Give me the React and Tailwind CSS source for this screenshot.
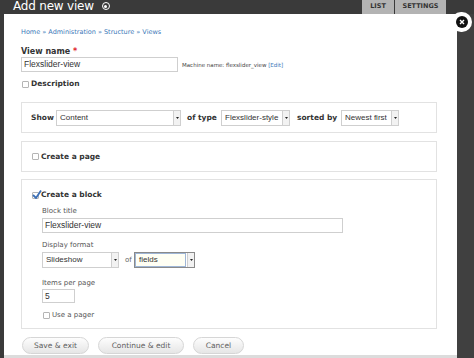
import React from "react";

const dv = { fontFamily: '"DejaVu Sans", Verdana, sans-serif' };
const ls = { fontFamily: '"Liberation Sans", Arial, sans-serif' };

function Check({ checked }) {
  return (
    <span className="relative inline-block w-[7px] h-[7px] border border-[#b5b5b5] bg-white rounded-[1px] shrink-0">
      {checked && (
        <svg className="absolute left-[-1px] top-[-3px]" width="10" height="9" viewBox="0 0 10 9">
          <path d="M1 5 L4 8 L9 0.5" stroke="#3b6fb6" strokeWidth="1.8" fill="none" />
        </svg>
      )}
    </span>
  );
}

function Select({ w, label, focus }) {
  return (
    <div
      className={`flex h-[16px] shrink-0 bg-white border ${focus ? "border-[#8a8a8a]" : "border-[#cfcfcf]"} ${w}`}
      style={ls}
    >
      <div className={`flex-1 min-w-0 overflow-hidden whitespace-nowrap flex items-center pl-[3px] text-[8px] font-normal text-[#333] ${focus ? "border border-[#9fb6d6] bg-[#fffff4]" : ""}`}>{label}</div>
      <div className="w-[7px] shrink-0 ml-[1px] border-l border-[#cfcfcf] bg-[#f2f2f2] flex items-center justify-center">
        <svg width="3" height="2" viewBox="0 0 3 2"><path d="M0 0 H3 L1.5 2 Z" fill="#222" /></svg>
      </div>
    </div>
  );
}

function Input({ w, value, h = "h-[15px]" }) {
  return (
    <div
      className={`${w} ${h} shrink-0 border border-[#cfcfcf] bg-white flex items-center pl-[2px] text-[8.5px] text-[#333]`}
      style={ls}
    >
      {value}
    </div>
  );
}

function Btn({ w, children }) {
  return (
    <div
      className={`${w} h-[17px] rounded-full border border-[#d6d6d6] bg-gradient-to-b from-[#fdfdfd] to-[#e6e6e6] flex items-center justify-center text-[7.5px] text-[#5e5e5e] whitespace-nowrap`}
      style={dv}
    >
      {children}
    </div>
  );
}

export default function App() {
  return (
    <div className="relative w-[474px] h-[358px] bg-[#404040] overflow-hidden flex flex-col" style={dv}>
      {/* header */}
      <div className="h-[14px] shrink-0 flex bg-[#3a3a3a] overflow-hidden">
        <div className="ml-[13px] text-[12px] leading-[13px] text-white tracking-[-0.2px] whitespace-nowrap">
          Add new view
        </div>
        <div className="ml-[8px] mt-[2px] w-[8px] h-[8px] rounded-full border border-white flex items-center justify-center">
          <div className="w-[3px] h-[3px] rounded-full bg-white" />
        </div>
        <div className="ml-auto mr-[28px] flex gap-[1px]">
          <div className="w-[32px] h-[14px] bg-[#b3b3b3] flex items-center justify-center text-[6.5px] font-bold text-[#333]">LIST</div>
          <div className="w-[51px] h-[14px] bg-[#b3b3b3] flex items-center justify-center text-[6.5px] font-bold text-[#333]">SETTINGS</div>
        </div>
      </div>

      {/* body */}
      <div className="flex flex-1">
        <div className="w-[4px] bg-[#3a3a3a]" />
        <div className="w-[453px] bg-white flex flex-col pl-[17px] pt-[14px]">
          <div className="text-[6.5px] leading-[8px] text-[#3a78b8] whitespace-nowrap">
            Home » Administration » Structure » Views
          </div>

          <div className="mt-[11px] text-[8px] leading-[10px] font-bold text-[#333]">
            View name <span className="text-[#e0262e]">*</span>
          </div>
          <div className="flex items-center">
            <Input w="w-[157px]" value="Flexslider-view" />
            <div className="ml-[4px] mt-[2px] text-[5.5px] text-[#444] whitespace-nowrap">
              Machine name: flexslider_view <span className="text-[#3a78b8]">[Edit]</span>
            </div>
          </div>

          <div className="mt-[6px] h-[12px] flex items-center gap-[2px] pl-[1px]">
            <Check />
            <span className="text-[7.5px] font-bold text-[#333]">Description</span>
          </div>

          {/* box 1 */}
          <div className="mt-[12px] w-[416px] h-[31px] border border-[#e2e2e2] flex items-center pl-[9px] text-[7.5px] font-bold text-[#333] whitespace-nowrap">
            <span className="w-[25px]">Show</span>
            <Select w="w-[125px]" label="Content" />
            <span className="ml-[6px] w-[34px]">of type</span>
            <Select w="w-[69px]" label="Flexslider-style" />
            <span className="ml-[7px] w-[44px]">sorted by</span>
            <Select w="w-[58px]" label="Newest first" />
          </div>

          {/* box 2 */}
          <div className="mt-[8px] w-[416px] h-[31px] border border-[#e2e2e2] flex items-center gap-[2px] pl-[10px]">
            <Check />
            <span className="text-[7.5px] font-bold text-[#333]">Create a page</span>
          </div>

          {/* box 3 */}
          <div className="mt-[7px] w-[416px] h-[150px] border border-[#e2e2e2] flex flex-col pl-[9px] pt-[9px]">
            <div className="h-[12px] flex items-center gap-[2px] pl-[1px]">
              <Check checked />
              <span className="text-[7.5px] font-bold text-[#333]">Create a block</span>
            </div>
            <div className="ml-[11px] flex flex-col">
              <div className="mt-[5px] text-[7px] leading-[10px] text-[#555]">Block title</div>
              <div className="mt-[2px]">
                <Input w="w-[301px]" value="Flexslider-view" />
              </div>
              <div className="mt-[7px] text-[7px] leading-[10px] text-[#555]">Display format</div>
              <div className="mt-[2px] flex items-center">
                <Select w="w-[77px]" label="Slideshow" />
                <span className="ml-[6px] w-[9px] text-[7px] text-[#666]">of</span>
                <Select w="w-[61px]" label="fields" focus />
              </div>
              <div className="mt-[10px] text-[7px] leading-[10px] text-[#555]">Items per page</div>
              <div className="mt-[1px]">
                <Input w="w-[33px]" h="h-[14px]" value="5" />
              </div>
              <div className="mt-[6px] h-[12px] flex items-center gap-[2px] pl-[1px]">
                <Check />
                <span className="text-[7px] text-[#555]">Use a pager</span>
              </div>
            </div>
          </div>

          {/* buttons */}
          <div className="mt-[8px] flex gap-[9px] pl-[1px]">
            <Btn w="w-[67px]">Save &amp; exit</Btn>
            <Btn w="w-[86px]">Continue &amp; edit</Btn>
            <Btn w="w-[51px]">Cancel</Btn>
          </div>
          <div className="flex-1" />
          <div className="h-[3px] ml-[-17px] bg-[#dcdcdc]" />
        </div>
        <div className="flex-1 bg-[#404040]" />
      </div>

      {/* close button */}
      <div className="absolute left-[451px] top-[12px] w-[21px] h-[20px] rounded-full bg-white flex items-center justify-center">
        <div className="w-[12px] h-[12px] rounded-full bg-[#111] flex items-center justify-center">
          <svg width="6" height="6" viewBox="0 0 6 6">
            <path d="M1 1 L5 5 M5 1 L1 5" stroke="white" strokeWidth="1.4" />
          </svg>
        </div>
      </div>
    </div>
  );
}
